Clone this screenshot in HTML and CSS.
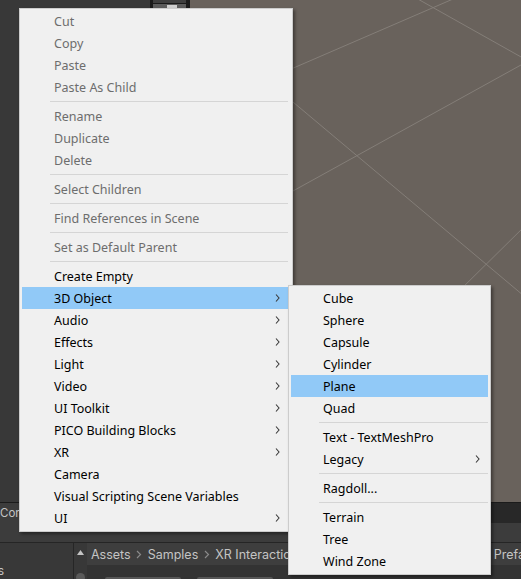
FILE: index.html
```html
<!DOCTYPE html>
<html>
<head>
<meta charset="utf-8">
<link rel="stylesheet" href="styles.css">
</head>
<body>
<div class="editor">
  <div class="top">
    <div class="hierarchy"></div>
    <div class="scene">
      <svg class="grid" viewBox="150 0 371 502" preserveAspectRatio="none">
        <line x1="150" y1="130" x2="460" y2="-4"/>
        <line x1="400" y1="-11" x2="530" y2="62"/>
        <line x1="150" y1="270" x2="530" y2="60"/>
        <line x1="150" y1="-18" x2="530" y2="301"/>
        <line x1="300" y1="448" x2="530" y2="221"/>
      </svg>
      <div class="scene-chip"><div class="chip-inner"><span class="chip-icon"></span></div></div>
    </div>
  </div>
  <div class="bottom">
    <div class="tabbar"><div class="tab">Console</div></div>
    <div class="toolbar"></div>
    <div class="project">
      <div class="folders"><span class="folder-label">Assets</span></div>
      <div class="scroll">
        <svg class="up" width="7" height="5" viewBox="0 0 7 5"><polygon points="0,5 3.5,0 7,5"/></svg>
        <span class="knob"></span>
      </div>
      <div class="content">
        <div class="crumbs">
          <span>Assets</span>
          <svg class="chev" width="6" height="9" viewBox="0 0 6 9"><polyline points="1,1 4.5,4.5 1,8"/></svg>
          <span>Samples</span>
          <svg class="chev" width="6" height="9" viewBox="0 0 6 9"><polyline points="1,1 4.5,4.5 1,8"/></svg>
          <span>XR Interaction Toolkit</span>
          <svg class="chev" width="6" height="9" viewBox="0 0 6 9"><polyline points="1,1 4.5,4.5 1,8"/></svg>
          <span>3.0</span>
          <svg class="chev" width="6" height="9" viewBox="0 0 6 9"><polyline points="1,1 4.5,4.5 1,8"/></svg>
          <span>Starter Assets</span>
          <svg class="chev" width="6" height="9" viewBox="0 0 6 9"><polyline points="1,1 4.5,4.5 1,8"/></svg>
          <span>Prefabs</span>
        </div>
        <div class="items"><div class="tile"></div><div class="tile"></div></div>
      </div>
    </div>
  </div>
</div>

<div class="menu main">
  <div class="item off">Cut</div>
  <div class="item off">Copy</div>
  <div class="item off">Paste</div>
  <div class="item off">Paste As Child</div>
  <div class="sep"></div>
  <div class="item off">Rename</div>
  <div class="item off">Duplicate</div>
  <div class="item off">Delete</div>
  <div class="sep"></div>
  <div class="item off">Select Children</div>
  <div class="sep"></div>
  <div class="item off">Find References in Scene</div>
  <div class="sep"></div>
  <div class="item off">Set as Default Parent</div>
  <div class="sep"></div>
  <div class="item">Create Empty</div>
  <div class="item hl">3D Object<svg class="arrow" width="5" height="8" viewBox="0 0 5 8"><polyline points="1,0.5 4,4 1,7.5"/></svg></div>
  <div class="item">Audio<svg class="arrow" width="5" height="8" viewBox="0 0 5 8"><polyline points="1,0.5 4,4 1,7.5"/></svg></div>
  <div class="item">Effects<svg class="arrow" width="5" height="8" viewBox="0 0 5 8"><polyline points="1,0.5 4,4 1,7.5"/></svg></div>
  <div class="item">Light<svg class="arrow" width="5" height="8" viewBox="0 0 5 8"><polyline points="1,0.5 4,4 1,7.5"/></svg></div>
  <div class="item">Video<svg class="arrow" width="5" height="8" viewBox="0 0 5 8"><polyline points="1,0.5 4,4 1,7.5"/></svg></div>
  <div class="item">UI Toolkit<svg class="arrow" width="5" height="8" viewBox="0 0 5 8"><polyline points="1,0.5 4,4 1,7.5"/></svg></div>
  <div class="item">PICO Building Blocks<svg class="arrow" width="5" height="8" viewBox="0 0 5 8"><polyline points="1,0.5 4,4 1,7.5"/></svg></div>
  <div class="item">XR<svg class="arrow" width="5" height="8" viewBox="0 0 5 8"><polyline points="1,0.5 4,4 1,7.5"/></svg></div>
  <div class="item">Camera</div>
  <div class="item">Visual Scripting Scene Variables</div>
  <div class="item">UI<svg class="arrow" width="5" height="8" viewBox="0 0 5 8"><polyline points="1,0.5 4,4 1,7.5"/></svg></div>
</div>

<div class="menu sub">
  <div class="item">Cube</div>
  <div class="item">Sphere</div>
  <div class="item">Capsule</div>
  <div class="item">Cylinder</div>
  <div class="item hl">Plane</div>
  <div class="item">Quad</div>
  <div class="sep"></div>
  <div class="item">Text - TextMeshPro</div>
  <div class="item">Legacy<svg class="arrow" width="5" height="8" viewBox="0 0 5 8"><polyline points="1,0.5 4,4 1,7.5"/></svg></div>
  <div class="sep"></div>
  <div class="item">Ragdoll...</div>
  <div class="sep"></div>
  <div class="item">Terrain</div>
  <div class="item">Tree</div>
  <div class="item">Wind Zone</div>
</div>
</body>
</html>
```

FILE: styles.css
```css
* { box-sizing: border-box; }
html, body { margin: 0; padding: 0; }
body {
  width: 521px;
  height: 579px;
  overflow: hidden;
  position: relative;
  background: #383838;
  font-family: Inter, "Noto Sans", sans-serif;
}
.editor { display: flex; flex-direction: column; width: 521px; height: 579px; }
.top { display: flex; height: 502px; flex: none; }
.hierarchy { width: 150px; background: #383838; }
.scene { flex: 1; position: relative; background: #69625c; overflow: hidden; }
.grid { display: block; width: 100%; height: 100%; }
.grid line { stroke: #847e78; stroke-width: 1; }
.scene-chip {
  position: absolute; left: 0; top: 0;
  width: 40px; height: 8px;
  background: #1a1a1a;
  padding: 0 4px 0 3px;
}
.chip-inner {
  height: 8px;
  background: #5b5b5b;
  border-top: 3px solid #3e3e3e;
  box-shadow: inset 0 1px 0 #1a1a1a;
  padding: 2px 0 0 14px;
}
.chip-icon { display: block; width: 10px; height: 3px; background: #cfcfcf; }

.bottom { flex: 1; display: flex; flex-direction: column; }
.tabbar { height: 21px; border-top: 1px solid #1b1b1b; background: #282828; display: flex; flex: none; }
.tab { background: #3c3c3c; color: #c4c4c4; font-size: 11.5px; line-height: 20px; padding: 0 10px 0 0; }
.toolbar { height: 20px; flex: none; background: #3c3c3c; border-bottom: 1px solid #252525; }
.project { flex: 1; display: flex; min-height: 0; }
.folders {
  width: 74px; flex: none; background: #383838; border-right: 1px solid #262626;
  overflow: hidden; padding-top: 21px; color: #c4c4c4; font-size: 12px; white-space: nowrap;
}
.folder-label { display: block; margin-left: -34px; line-height: 14px; }
.scroll {
  width: 13px; flex: none; background: #383838;
  display: flex; flex-direction: column; align-items: center; padding-top: 7px;
}
.up { fill: #c4c4c4; display: block; }
.knob { display: block; width: 9px; height: 9px; border-radius: 50%; background: #5a5a5a; margin-top: 18px; }
.content { flex: 1; display: flex; flex-direction: column; background: #333333; min-width: 0; }
.crumbs {
  height: 22px; flex: none; background: #3e3e3e;
  display: flex; align-items: center; gap: 5.5px; padding-left: 4px;
  white-space: nowrap; overflow: hidden;
  color: #c4c4c4; font-size: 12.5px;
}
.crumbs span { flex: none; }
.chev { flex: none; fill: none; stroke: #8a8a8a; stroke-width: 1.2; }
.items { display: flex; gap: 16px; padding: 12px 0 0 18px; }
.tile { width: 76px; height: 10px; background: #575757; border-radius: 2px; }

.menu {
  position: absolute;
  background: #f0f0f0;
  border: 1px solid #cccccc;
  box-shadow: 2px 2px 3px rgba(0, 0, 0, 0.4);
  font-family: "Noto Sans", sans-serif;
  font-size: 12.5px;
  color: #000;
}
.main { left: 19px; top: 8px; width: 274px; padding: 1px 4px 2px 2px; }
.sub { left: 288px; top: 285px; width: 203px; padding: 1px 2px 2px 2px; }
.item {
  height: 22px; line-height: 20px;
  padding: 2px 8px 0 32px;
  display: flex; align-items: center; justify-content: space-between;
  white-space: nowrap;
}
.item.off { color: #6d6d6d; }
.item.hl { background: #91c9f7; }
.arrow { flex: none; fill: none; stroke: #3a3a3a; stroke-width: 1.1; margin-top: -2px; }
.sep { height: 7px; padding-top: 3px; margin-left: 28px; }
.sep::before { content: ""; display: block; height: 1px; background: #d5d5d5; }
```
